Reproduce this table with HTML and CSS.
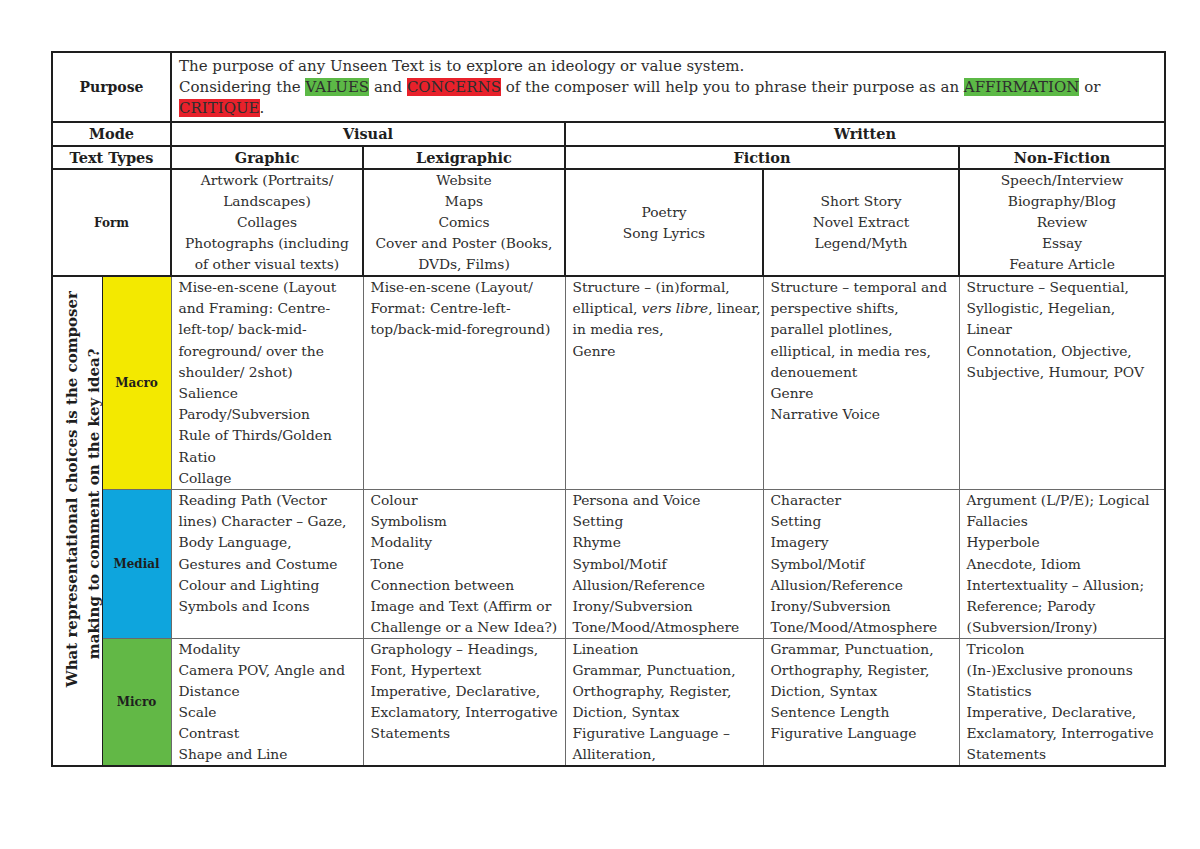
FILE: index.html
```html
<!DOCTYPE html>
<html lang="en">
<head>
<meta charset="utf-8">
<title>Unseen Text</title>
<link rel="stylesheet" href="styles.css">
</head>
<body>
<table class="grid">
  <colgroup>
    <col class="c-side">
    <col class="c-sub">
    <col class="c-graphic">
    <col class="c-lexi">
    <col class="c-poetry">
    <col class="c-story">
    <col class="c-nonfic">
  </colgroup>
  <tr class="r-purpose">
    <th colspan="2" class="lbl lbl-purpose">Purpose</th>
    <td colspan="5" class="purpose-text">The purpose of any Unseen Text is to explore an ideology or value system.<br>Considering the <span class="hl-green">VALUES</span> and <span class="hl-red">CONCERNS</span> of the composer will help you to phrase their purpose as an <span class="hl-green">AFFIRMATION</span> or<br><span class="hl-red">CRITIQUE</span>.</td>
  </tr>
  <tr class="r-mode">
    <th colspan="2" class="head">Mode</th>
    <th colspan="2" class="head">Visual</th>
    <th colspan="3" class="head">Written</th>
  </tr>
  <tr class="r-types">
    <th colspan="2" class="head">Text Types</th>
    <th class="head">Graphic</th>
    <th class="head">Lexigraphic</th>
    <th colspan="2" class="head">Fiction</th>
    <th class="head">Non-Fiction</th>
  </tr>
  <tr class="r-form">
    <th colspan="2" class="lbl lbl-form">Form</th>
    <td class="form">Artwork (Portraits/<br>Landscapes)<br>Collages<br>Photographs (including<br>of other visual texts)</td>
    <td class="form">Website<br>Maps<br>Comics<br>Cover and Poster (Books,<br>DVDs, Films)</td>
    <td class="form">Poetry<br>Song Lyrics</td>
    <td class="form">Short Story<br>Novel Extract<br>Legend/Myth</td>
    <td class="form">Speech/Interview<br>Biography/Blog<br>Review<br>Essay<br>Feature Article</td>
  </tr>
  <tr class="r-macro">
    <th rowspan="3" class="side"><span class="side-text"><span class="side-line1">What representational choices is the composer</span><br><span class="side-line2">making to comment on the key idea?</span></span></th>
    <th class="sub sub-macro">Macro</th>
    <td class="body">Mise-en-scene (Layout<br>and Framing: Centre-<br>left-top/ back-mid-<br>foreground/ over the<br>shoulder/ 2shot)<br>Salience<br>Parody/Subversion<br>Rule of Thirds/Golden<br>Ratio<br>Collage</td>
    <td class="body">Mise-en-scene (Layout/<br>Format: Centre-left-<br>top/back-mid-foreground)</td>
    <td class="body">Structure – (in)formal,<br>elliptical, <i>vers libre</i>, linear,<br>in media res,<br>Genre</td>
    <td class="body">Structure – temporal and<br>perspective shifts,<br>parallel plotlines,<br>elliptical, in media res,<br>denouement<br>Genre<br>Narrative Voice</td>
    <td class="body">Structure – Sequential,<br>Syllogistic, Hegelian,<br>Linear<br>Connotation, Objective,<br>Subjective, Humour, POV</td>
  </tr>
  <tr class="r-medial">
    <th class="sub sub-medial">Medial</th>
    <td class="body">Reading Path (Vector<br>lines) Character – Gaze,<br>Body Language,<br>Gestures and Costume<br>Colour and Lighting<br>Symbols and Icons</td>
    <td class="body">Colour<br>Symbolism<br>Modality<br>Tone<br>Connection between<br>Image and Text (Affirm or<br>Challenge or a New Idea?)</td>
    <td class="body">Persona and Voice<br>Setting<br>Rhyme<br>Symbol/Motif<br>Allusion/Reference<br>Irony/Subversion<br>Tone/Mood/Atmosphere</td>
    <td class="body">Character<br>Setting<br>Imagery<br>Symbol/Motif<br>Allusion/Reference<br>Irony/Subversion<br>Tone/Mood/Atmosphere</td>
    <td class="body">Argument (L/P/E); Logical<br>Fallacies<br>Hyperbole<br>Anecdote, Idiom<br>Intertextuality – Allusion;<br>Reference; Parody<br>(Subversion/Irony)</td>
  </tr>
  <tr class="r-micro">
    <th class="sub sub-micro">Micro</th>
    <td class="body body-last">Modality<br>Camera POV, Angle and<br>Distance<br>Scale<br>Contrast<br>Shape and Line</td>
    <td class="body body-last">Graphology – Headings,<br>Font, Hypertext<br>Imperative, Declarative,<br>Exclamatory, Interrogative<br>Statements</td>
    <td class="body body-last">Lineation<br>Grammar, Punctuation,<br>Orthography, Register,<br>Diction, Syntax<br>Figurative Language –<br>Alliteration,</td>
    <td class="body body-last">Grammar, Punctuation,<br>Orthography, Register,<br>Diction, Syntax<br>Sentence Length<br>Figurative Language</td>
    <td class="body body-last">Tricolon<br>(In-)Exclusive pronouns<br>Statistics<br>Imperative, Declarative,<br>Exclamatory, Interrogative<br>Statements</td>
  </tr>
</table>
</body>
</html>
```

FILE: styles.css
```css
html, body {
  margin: 0;
  padding: 0;
  background: #ffffff;
}

body {
  padding: 51px 0 0 51px;
  font-family: "DejaVu Serif", serif;
  color: #2e2e2e;
}

.grid {
  border-collapse: collapse;
  table-layout: fixed;
  width: 1113px;
  border: 2px solid #1e1e1e;
}

.c-side { width: 50px; }
.c-sub { width: 69px; }
.c-graphic { width: 192px; }
.c-lexi { width: 202px; }
.c-poetry { width: 198px; }
.c-story { width: 196px; }
.c-nonfic { width: 206px; }

th, td {
  padding: 0;
  border: 1px solid #6a6a6a;
  vertical-align: top;
  overflow: hidden;
}

.r-purpose td, .r-purpose th,
.r-mode th, .r-types th, .r-form th, .r-form td {
  border-color: #1e1e1e;
  border-width: 2px;
}

.r-purpose { height: 70px; }
.r-mode { height: 24px; }
.r-types { height: 23px; }
.r-form { height: 107px; }
.r-macro { height: 211px; }
.r-medial { height: 149px; }
.r-micro { height: 127px; }

.lbl {
  vertical-align: middle;
  text-align: center;
  font-weight: bold;
  color: #1e1e1e;
}

.lbl-purpose { font-size: 14px; }
.lbl-form { font-size: 12px; }

.purpose-text {
  font-size: 15px;
  line-height: 21px;
  padding: 3px 7px 0 7px;
}

.hl-green { background: #5cb946; }
.hl-red { background: #e8212b; }

.head {
  vertical-align: middle;
  text-align: center;
  font-size: 14.5px;
  font-weight: bold;
  color: #1e1e1e;
  line-height: 20px;
}

.form {
  vertical-align: middle;
  text-align: center;
  font-size: 13.8px;
  line-height: 21px;
  white-space: nowrap;
}

.body {
  font-size: 13.8px;
  line-height: 21.2px;
  padding: 0 2px 0 7px;
  white-space: nowrap;
}

.body-last {
  line-height: 21px;
}

.side {
  vertical-align: middle;
  text-align: center;
  border-color: #1e1e1e;
}

.side-text {
  display: inline-block;
  writing-mode: vertical-rl;
  transform: translateX(6px) rotate(180deg);
  font-size: 15px;
  font-weight: bold;
  line-height: 22px;
  color: #1e1e1e;
  text-align: center;
  white-space: nowrap;
}

.side-line1 {
  padding-inline-start: 60px;
}

.side-line2 {
  padding-inline-start: 30px;
}

.sub {
  vertical-align: middle;
  text-align: center;
  font-size: 12px;
  font-weight: bold;
  color: #1e1e1e;
}

.sub-macro { background: #f3e900; }
.sub-medial { background: #0ea5dd; }
.sub-micro { background: #62b846; }
```
